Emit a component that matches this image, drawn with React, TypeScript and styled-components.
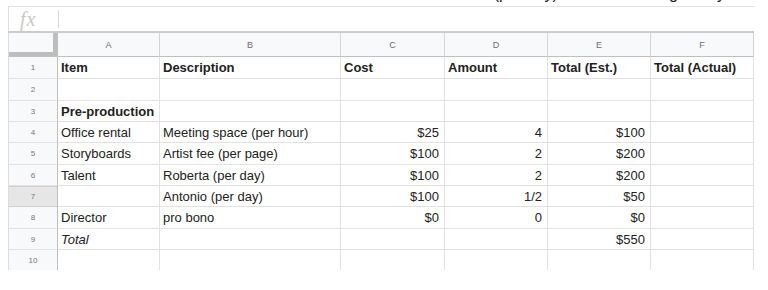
import React from "react";
import styled, { createGlobalStyle } from "styled-components";

const Global = createGlobalStyle`
  html, body { margin: 0; padding: 0; background: #ffffff; }
  body { font-family: "Liberation Sans", Arial, sans-serif; }
`;

const Page = styled.div`
  width: 768px;
  height: 290px;
  overflow: hidden;
  padding-left: 8px;
  box-sizing: border-box;
`;

const Caption = styled.div`
  height: 6px;
  overflow: hidden;
  width: 747px;
`;

const CaptionLine = styled.div`
  margin-top: -16px;
  font-size: 16px;
  line-height: 20px;
  color: #222;
  text-align: right;
  padding-right: 30px;
  white-space: nowrap;
`;

const FormulaBar = styled.div`
  width: 747px;
  height: 25px;
  box-sizing: border-box;
  border-top: 1px solid #e3e3e3;
  border-left: 1px solid #e0e0e0;
  display: flex;
  align-items: center;
`;

const FxLabel = styled.div`
  width: 49px;
  box-sizing: border-box;
  padding-left: 11px;
  font-family: "Liberation Serif", "Times New Roman", serif;
  font-style: italic;
  font-size: 20px;
  color: #c8c8c8;
  letter-spacing: 1px;
`;

const FxDivider = styled.div`
  width: 1px;
  height: 18px;
  background: #dadada;
`;

const Sheet = styled.div`
  display: grid;
  grid-template-columns: 50px 102px 181px 104px 103px 103px 103px;
  grid-template-rows: 24px 22px 22px 21px 21px 22px 21px 21px 22px 21px 20px;
  border-top: 2px solid #cbcbcb;
  width: 746px;
`;

const Corner = styled.div`
  background: #f8f9fa;
  border-left: 1px solid #dcdcdc;
  border-right: 1px solid #c0c0c0;
  border-bottom: 1px solid #c0c0c0;
  box-sizing: border-box;
  position: relative;
  &::after {
    content: "";
    position: absolute;
    right: 0;
    bottom: 0;
    width: 100%;
    height: 100%;
    box-sizing: border-box;
    border-right: 4px solid #bdbdbd;
    border-bottom: 4px solid #bdbdbd;
  }
`;

const ColHead = styled.div`
  background: #f8f9fa;
  border-right: 1px solid #d4d4d4;
  border-bottom: 1px solid #c0c0c0;
  box-sizing: border-box;
  display: flex;
  align-items: center;
  justify-content: center;
  font-size: 9px;
  color: #6f6f6f;
  padding-top: 1px;
`;

const RowHead = styled.div<{ $active?: boolean; $last?: boolean }>`
  background: ${(p) => (p.$active ? "#e6e6e6" : "#f8f9fa")};
  border-left: 1px solid #dcdcdc;
  border-right: 1px solid #c0c0c0;
  border-bottom: ${(p) => (p.$last ? "none" : p.$active ? "1px solid #cfcfcf" : "1px solid #e2e2e2")};
  ${(p) => (p.$active ? "box-shadow: inset 0 1px 0 #cfcfcf;" : "")}
  box-sizing: border-box;
  display: flex;
  align-items: center;
  justify-content: center;
  font-size: 8px;
  color: #777;
`;

const Cell = styled.div<{ $align?: "left" | "right"; $bold?: boolean; $italic?: boolean; $last?: boolean }>`
  border-right: 1px solid #e2e2e2;
  border-bottom: ${(p) => (p.$last ? "none" : "1px solid #e2e2e2")};
  box-sizing: border-box;
  display: flex;
  align-items: center;
  justify-content: ${(p) => (p.$align === "right" ? "flex-end" : "flex-start")};
  padding: 0 5px 0 3px;
  font-size: 13px;
  color: #222;
  font-weight: ${(p) => (p.$bold ? 700 : 400)};
  font-style: ${(p) => (p.$italic ? "italic" : "normal")};
  white-space: nowrap;
  overflow: hidden;
`;

type Row = {
  cells: string[];
  bold?: boolean;
  italic?: boolean;
  active?: boolean;
  heading?: boolean;
};

const rows: Row[] = [
  { cells: ["Item", "Description", "Cost", "Amount", "Total (Est.)", "Total (Actual)"], bold: true, heading: true },
  { cells: ["", "", "", "", "", ""] },
  { cells: ["Pre-production", "", "", "", "", ""], bold: true },
  { cells: ["Office rental", "Meeting space (per hour)", "$25", "4", "$100", ""] },
  { cells: ["Storyboards", "Artist fee (per page)", "$100", "2", "$200", ""] },
  { cells: ["Talent", "Roberta (per day)", "$100", "2", "$200", ""] },
  { cells: ["", "Antonio (per day)", "$100", "1/2", "$50", ""], active: true },
  { cells: ["Director", "pro bono", "$0", "0", "$0", ""] },
  { cells: ["Total", "", "", "", "$550", ""], italic: true },
  { cells: ["", "", "", "", "", ""] },
];

const cols = ["A", "B", "C", "D", "E", "F"];

export default function App() {
  return (
    <Page>
      <Global />
      <Caption>
        <CaptionLine>the item cost (per day) and amount to get it by</CaptionLine>
      </Caption>
      <FormulaBar>
        <FxLabel>fx</FxLabel>
        <FxDivider />
      </FormulaBar>
      <Sheet>
        <Corner />
        {cols.map((c) => (
          <ColHead key={c}>{c}</ColHead>
        ))}
        {rows.map((r, i) => {
          const last = i === rows.length - 1;
          return (
            <React.Fragment key={i}>
              <RowHead $active={r.active} $last={last}>{i + 1}</RowHead>
              {r.cells.map((v, j) => (
                <Cell
                  key={j}
                  $align={j >= 2 && !r.heading ? "right" : "left"}
                  $bold={r.bold}
                  $italic={r.italic && j === 0}
                  $last={last}
                >
                  {v}
                </Cell>
              ))}
            </React.Fragment>
          );
        })}
      </Sheet>
    </Page>
  );
}
